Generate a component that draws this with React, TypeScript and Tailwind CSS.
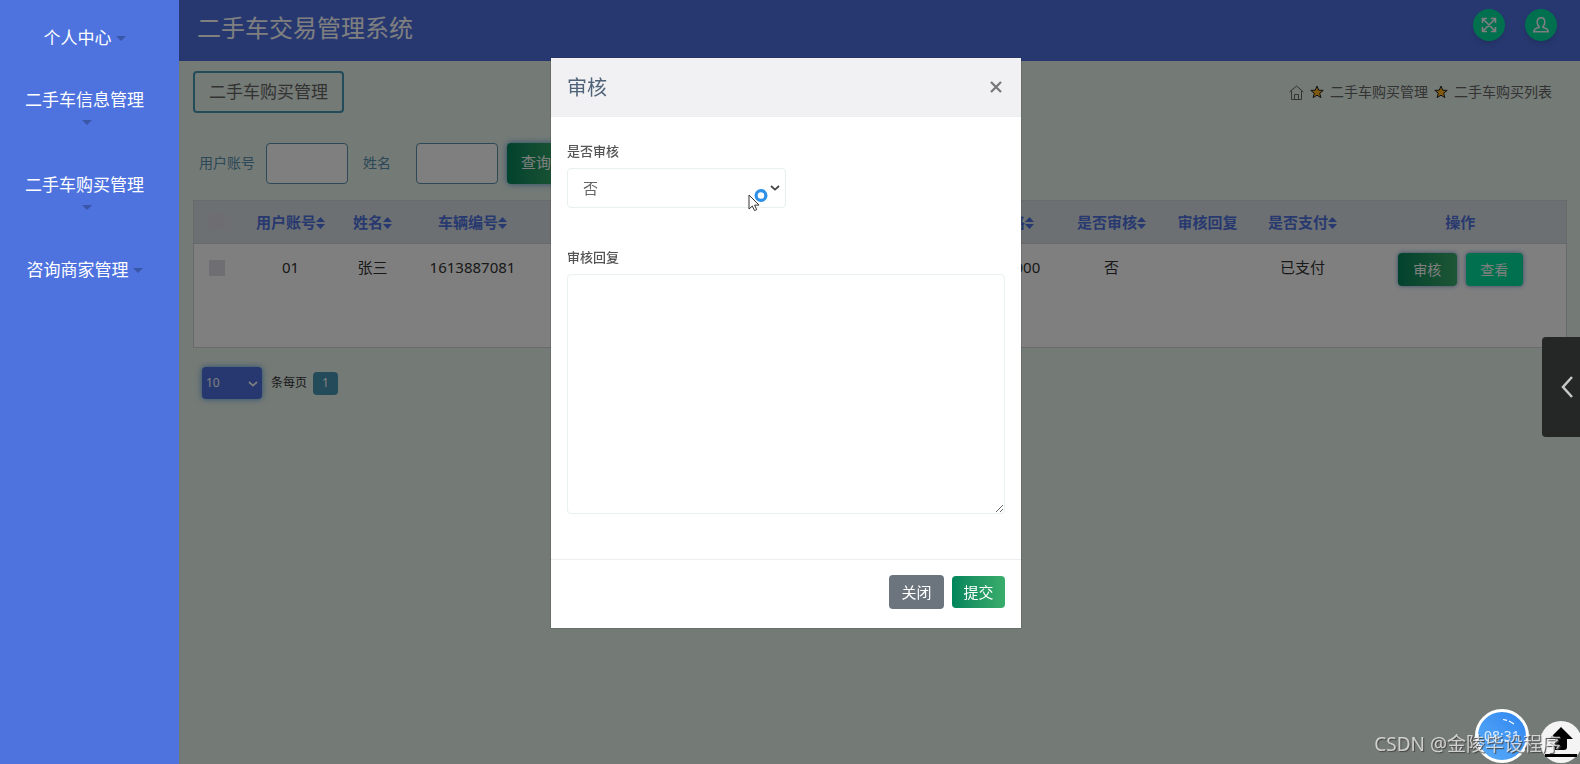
import { useState } from "react";

const menu = [
  { label: "个人中心", wrap: false },
  { label: "二手车信息管理", wrap: true },
  { label: "二手车购买管理", wrap: true },
  { label: "咨询商家管理", wrap: false },
];

const columns = [
  { title: "用户账号", sort: true, value: "01" },
  { title: "姓名", sort: true, value: "张三" },
  { title: "车辆编号", sort: true, value: "1613887081" },
  { title: "", sort: false, value: "" },
  { title: "价格", sort: true, value: "150000" },
  { title: "是否审核", sort: true, value: "否" },
  { title: "审核回复", sort: false, value: "" },
  { title: "是否支付", sort: true, value: "已支付" },
];

function Caret() {
  return (
    <svg width="10" height="5" viewBox="0 0 10 5" className="shrink-0" aria-hidden="true">
      <path d="M0 0h10L5 5z" fill="#3a56a8" />
    </svg>
  );
}

function SortIcon() {
  return (
    <svg width="9" height="12" viewBox="0 0 9 12" className="inline-block align-[-1px]" aria-hidden="true">
      <path d="M4.500 0L9 5H0zM0 7h9L4.500 12z" fill="currentColor" />
    </svg>
  );
}

function Chevron({ className }: { className: string }) {
  return (
    <svg width="10" height="6" viewBox="0 0 10 6" fill="none" className={className} aria-hidden="true">
      <path d="M1 1l4 3.600L9 1" stroke="currentColor" strokeWidth="1.700" />
    </svg>
  );
}

function Star() {
  return (
    <svg width="14" height="14" viewBox="0 0 14 14" aria-hidden="true">
      <path
        d="M7 1l1.700 4.200 4.500.2-3.500 2.800 1.200 4.400L7 10.200l-3.900 2.400 1.200-4.400L.8 5.400l4.500-.2z"
        fill="#ffb41e"
        stroke="#222"
        strokeWidth="1"
      />
    </svg>
  );
}

function Sidebar() {
  return (
    <nav className="relative z-20 w-[179px] shrink-0 bg-[#4e73df] pt-[7px]">
      <ul>
        {menu.map((item) => (
          <li key={item.label}>
            <a
              href="#"
              className={
                item.wrap
                  ? "flex flex-col items-center pt-[19px] pr-2.5 pb-[22px] text-[17px] leading-6 text-white"
                  : "flex items-center justify-center gap-1 py-[19px] pr-2.5 text-[17px] leading-6 text-white"
              }
            >
              {item.label}
              {item.wrap ? (
                <span className="flex h-5 items-center pl-1">
                  <Caret />
                </span>
              ) : (
                <Caret />
              )}
            </a>
          </li>
        ))}
      </ul>
    </nav>
  );
}

function Header() {
  return (
    <header className="flex h-[61px] items-start justify-between bg-[#4e70e0] pr-[23px] pl-[18px]">
      <h1 className="pt-2.5 text-2xl leading-9 text-white">二手车交易管理系统</h1>
      <div className="flex gap-5 pt-[9px]">
        <button
          type="button"
          aria-label="全屏"
          className="flex size-8 items-center justify-center rounded-full bg-[#00e09c] text-white shadow-md"
        >
          <svg width="16" height="16" viewBox="0 0 16 16" fill="none" stroke="currentColor" strokeWidth="1.600">
            <path d="M1.500 1.500l13 13M14.500 1.500l-13 13M1.500 6V1.500H6M10 1.500h4.500V6M14.500 10v4.500H10M6 14.500H1.500V10" />
          </svg>
        </button>
        <button
          type="button"
          aria-label="用户"
          className="flex size-8 items-center justify-center rounded-full bg-[#00e09c] text-white shadow-md"
        >
          <svg width="16" height="16" viewBox="0 0 16 16" fill="none" stroke="currentColor" strokeWidth="1.600">
            <path d="M6 9.500C4.700 8.500 4.200 6.800 4.200 5 4.200 2.400 5.700.8 8 .8s3.800 1.600 3.800 4.200c0 1.800-.5 3.500-1.800 4.500v1c2.800.6 5 1.600 5.200 4.200H.8C1 12.100 3.200 11.100 6 10.500z" />
          </svg>
        </button>
      </div>
    </header>
  );
}

function Breadcrumb() {
  return (
    <nav className="flex items-center gap-1.5 text-sm text-[#666]">
      <a href="#" aria-label="首页">
        <svg width="15" height="15" viewBox="0 0 15 15" fill="none" stroke="currentColor">
          <path d="M.5 7l7-6 7 6M2.500 5.500v9h10v-9M5.500 14.500v-5h4v5" />
        </svg>
      </a>
      <Star />
      <a href="#">二手车购买管理</a>
      <Star />
      <span>二手车购买列表</span>
    </nav>
  );
}

function Filters() {
  return (
    <form className="mt-[29px] flex h-[42px] items-center text-sm text-[#5a90ac]">
      <label htmlFor="account" className="w-[73px] pl-1.5">
        用户账号
      </label>
      <input id="account" className="h-[41px] w-[82px] rounded border border-[#5a90ac] bg-white px-3" />
      <label htmlFor="name" className="w-[68px] pl-[15px]">
        姓名
      </label>
      <input id="name" className="h-[41px] w-[82px] rounded border border-[#5a90ac] bg-white px-3" />
      <button
        type="button"
        className="ml-[9px] h-[41px] w-[58px] rounded bg-linear-to-r from-[#00855c] to-[#38ad6b] text-[15px] text-white shadow-[0_0_6px_#4e93cf]"
      >
        查询
      </button>
    </form>
  );
}

function OrderTable() {
  return (
    <table className="mt-4 w-full table-fixed border border-[#d0d4d6] bg-white text-center text-[15px] leading-6 text-[#333]">
      <colgroup>
        <col className="w-[46px]" />
        <col className="w-[102px]" />
        <col className="w-[62px]" />
        <col className="w-[138px]" />
        <col />
        <col className="w-[88px]" />
        <col className="w-[106px]" />
        <col className="w-[86px]" />
        <col className="w-[104px]" />
        <col className="w-[212px]" />
      </colgroup>
      <thead>
        <tr className="h-[43px] border-b border-[#d0d4d6] bg-[#dae0e4] text-[#4e73df]">
          <th>
            <input
              type="checkbox"
              aria-label="全选"
              className="mx-auto block size-4 appearance-none bg-[#dddde4]"
            />
          </th>
          {columns.map((col, i) => (
            <th key={i} className="font-bold">
              {col.title}
              {col.sort && <SortIcon />}
            </th>
          ))}
          <th className="font-bold">操作</th>
        </tr>
      </thead>
      <tbody>
        <tr className="h-[104px] align-top">
          <td className="pt-4">
            <input
              type="checkbox"
              aria-label="选择"
              className="mx-auto block size-4 appearance-none bg-[#dddde6]"
            />
          </td>
          {columns.map((col, i) => (
            <td key={i} className="pt-[11px]">
              {col.value}
            </td>
          ))}
          <td className="pt-[9px]">
            <div className="flex justify-center gap-[9px] text-sm text-white">
              <button
                type="button"
                className="h-[33px] w-[59px] rounded bg-linear-to-r from-[#00855c] to-[#38ad6b] shadow-[0_0_5px_#6e93cf]"
              >
                审核
              </button>
              <button
                type="button"
                className="h-[33px] w-[57px] rounded bg-[#00e09c] shadow-[0_0_5px_#6e93cf]"
              >
                查看
              </button>
            </div>
          </td>
        </tr>
      </tbody>
    </table>
  );
}

function Pagination() {
  return (
    <div className="mt-[19px] flex items-center pl-[9px] text-xs text-[#333]">
      <div className="relative">
        <select
          id="page-size"
          className="block h-8 w-[60px] appearance-none rounded bg-[#4e70e0] pl-1 text-white shadow-[0_0_6px_#4e9ddf]"
        >
          <option>10</option>
        </select>
        <Chevron className="pointer-events-none absolute top-3.5 right-1 text-white" />
      </div>
      <label htmlFor="page-size" className="ml-[9px]">
        条每页
      </label>
      <button type="button" className="ml-1.5 h-[23px] w-[25px] rounded bg-[#4797b5] text-white">
        1
      </button>
    </div>
  );
}

function ReviewModal({ onClose }: { onClose: () => void }) {
  return (
    <div className="fixed inset-0 z-10 flex items-start justify-center bg-black/50 pt-[58px] pr-2">
      <div role="dialog" aria-labelledby="modal-title" className="w-[470px] bg-white shadow-[0_0_1px_#333]">
        <div className="flex h-[59px] items-center justify-between border-b border-[#ecefef] bg-[#f1f1f3] px-4">
          <h2 id="modal-title" className="pt-0.5 text-xl text-[#4f6378]">
            审核
          </h2>
          <button type="button" aria-label="关闭" onClick={onClose} className="mr-[3px] text-[#777]">
            <svg width="12" height="12" viewBox="0 0 12 12" fill="none" aria-hidden="true">
              <path d="M1 1l10 10M11 1L1 11" stroke="currentColor" strokeWidth="2.200" />
            </svg>
          </button>
        </div>
        <div className="px-4 pt-6 pb-[45px] text-[#666]">
          <label htmlFor="review" className="block text-[13px] leading-5 font-medium text-[#555]">
            是否审核
          </label>
          <div className="relative mt-[7px] w-[219px]">
            <select
              id="review"
              className="block h-10 w-full appearance-none rounded border border-[#e9f0f0] bg-white pl-[15px] text-[15px]"
            >
              <option>否</option>
              <option>是</option>
            </select>
            <Chevron className="pointer-events-none absolute top-[17px] right-1.5 text-[#444]" />
          </div>
          <label htmlFor="reply" className="mt-[39px] block text-[13px] leading-5 font-medium text-[#555]">
            审核回复
          </label>
          <textarea
            id="reply"
            className="mt-[7px] block h-[240px] w-full rounded border border-[#e9f0f0] bg-white p-3 text-[15px]"
          />
        </div>
        <div className="flex h-[69px] items-start justify-end gap-2 border-t border-[#ecefef] px-4 pt-[15px] text-[15px] text-white">
          <button type="button" onClick={onClose} className="h-[34px] w-[55px] rounded bg-[#6c757d]">
            关闭
          </button>
          <button
            type="button"
            className="mt-px h-8 w-[53px] rounded-sm bg-linear-to-r from-[#00855c] to-[#38ad6b]"
          >
            提交
          </button>
        </div>
      </div>
    </div>
  );
}

function Pointer() {
  return (
    <svg
      width="22"
      height="26"
      viewBox="0 0 22 26"
      className="pointer-events-none fixed top-[187px] left-[748px] z-30"
      aria-hidden="true"
    >
      <path d="M1 8v14l3.300-3 2.200 4.600 2.200-1-2.100-4.500H11z" fill="#fff" stroke="#333" />
      <circle cx="13" cy="8.500" r="4.900" fill="#fff" stroke="#2f90e8" strokeWidth="3.200" />
    </svg>
  );
}

function FloatingWidgets() {
  return (
    <>
      <button
        type="button"
        aria-label="展开"
        className="fixed top-[337px] right-0 z-30 flex h-[100px] w-[38px] items-center justify-end rounded-l bg-[#252626] pr-[7px] text-[#c8c8c8]"
      >
        <svg width="12" height="22" viewBox="0 0 12 22" fill="none" aria-hidden="true">
          <path d="M11 1L2 11l9 10" stroke="currentColor" strokeWidth="2.500" />
        </svg>
      </button>
      <div className="fixed right-[51px] bottom-px z-30 flex size-[54px] items-center justify-center rounded-full border-3 border-white bg-linear-to-bl from-[#2f85f0] to-[#5aadf8] text-sm text-white/80">
        08:31
        <svg width="14" height="8" viewBox="0 0 14 8" fill="none" className="absolute top-1.5 right-2.5" aria-hidden="true">
          <path d="M1 1.500l4 .8M7 3l5 3" stroke="#fff" strokeWidth="1.200" />
        </svg>
      </div>
      <button
        type="button"
        aria-label="返回顶部"
        className="fixed -right-0.5 bottom-px z-30 flex size-[42px] items-center justify-center rounded-full bg-[#f4f4f4]"
      >
        <svg width="34" height="34" viewBox="0 0 34 34" aria-hidden="true">
          <path d="M17 2l12 12h-6v8q0 3-3 3h-9V14H5zM1 29h32v3H1z" fill="#000" />
        </svg>
      </button>
      <p className="fixed right-[19px] bottom-1.5 z-40 text-[19px] leading-7 text-white/70 [text-shadow:1px_1px_1px_#444]">
        CSDN @金陵毕设程序
      </p>
    </>
  );
}

export default function App() {
  const [open, setOpen] = useState(true);

  return (
    <div className="flex min-h-screen bg-[#e8f4ec] font-['Noto_Sans','Noto_Sans_CJK_SC',sans-serif]">
      <Sidebar />
      <div className="min-w-0 flex-1">
        <Header />
        <main className="pt-2.5 pr-[13px] pl-3.5">
          <div className="flex items-center justify-between pr-[15px]">
            <h2 className="flex h-[42px] items-center rounded border-2 border-[#4797b5] px-3.5 text-[17px] text-[#666]">
              二手车购买管理
            </h2>
            <Breadcrumb />
          </div>
          <Filters />
          <OrderTable />
          <Pagination />
        </main>
      </div>
      {open && <ReviewModal onClose={() => setOpen(false)} />}
      <Pointer />
      <FloatingWidgets />
    </div>
  );
}
